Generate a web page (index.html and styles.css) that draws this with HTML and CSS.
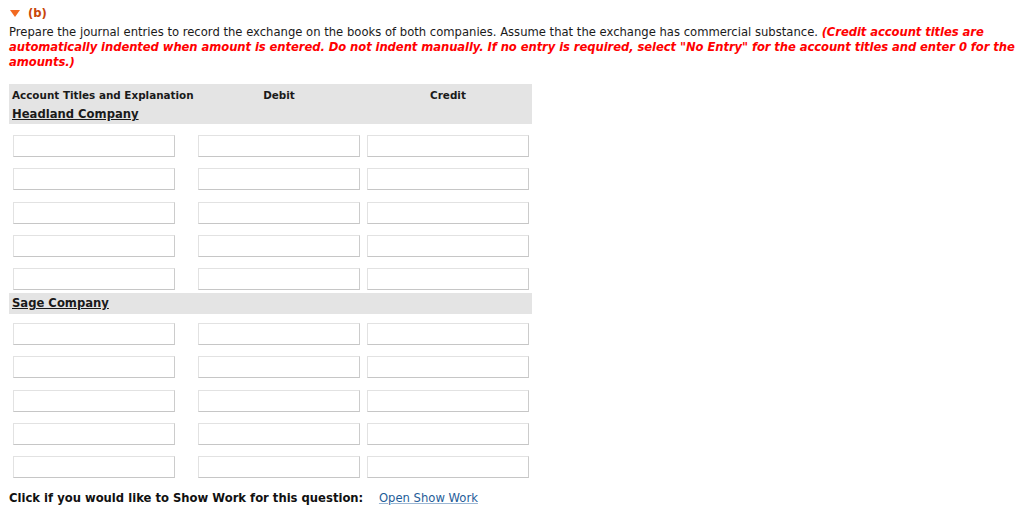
FILE: index.html
```html
<!DOCTYPE html>
<html>
<head>
<meta charset="utf-8">
<link rel="stylesheet" href="styles.css">
</head>
<body>
<div class="page">
  <div class="part-head">
    <span class="tri"></span><span class="part-label">(b)</span>
  </div>
  <p class="prompt">Prepare the journal entries to record the exchange on the books of both companies. Assume that the exchange has commercial substance. <span class="note">(Credit account titles are automatically indented when amount is entered. Do not indent manually. If no entry is required, select "No Entry" for the account titles and enter 0 for the amounts.)</span></p>

  <div class="journal">
    <div class="band band-head">
      <div class="row head-row">
        <div class="h1">Account Titles and Explanation</div>
        <div class="hc hc2">Debit</div>
        <div class="hc hc3">Credit</div>
      </div>
      <div class="company">Headland Company</div>
    </div>
    <div class="entries">
      <div class="row"><input class="c1"><input class="c2"><input class="c3"></div>
      <div class="row"><input class="c1"><input class="c2"><input class="c3"></div>
      <div class="row"><input class="c1"><input class="c2"><input class="c3"></div>
      <div class="row"><input class="c1"><input class="c2"><input class="c3"></div>
      <div class="row"><input class="c1"><input class="c2"><input class="c3"></div>
    </div>
    <div class="band band-sage">
      <div class="company">Sage Company</div>
    </div>
    <div class="entries entries-sage">
      <div class="row"><input class="c1"><input class="c2"><input class="c3"></div>
      <div class="row"><input class="c1"><input class="c2"><input class="c3"></div>
      <div class="row"><input class="c1"><input class="c2"><input class="c3"></div>
      <div class="row"><input class="c1"><input class="c2"><input class="c3"></div>
      <div class="row"><input class="c1"><input class="c2"><input class="c3"></div>
    </div>
  </div>

  <div class="showwork">
    <span class="sw-label">Click if you would like to Show Work for this question:</span>
    <a class="sw-link" href="#">Open Show Work</a>
  </div>
</div>
</body>
</html>
```
FILE: styles.css
```css
html, body {
  margin: 0;
  padding: 0;
  background: #ffffff;
}
.page {
  padding: 6px 0 0 9px;
  font-family: "DejaVu Sans", Verdana, sans-serif;
  font-size: 11.6px;
  color: #1a1a1a;
}
.part-head {
  display: flex;
  align-items: center;
  height: 14px;
}
.tri {
  width: 0;
  height: 0;
  border-left: 5px solid transparent;
  border-right: 5px solid transparent;
  border-top: 7px solid #f26a21;
  margin-right: 8px;
  margin-left: 1px;
}
.part-label {
  color: #c8460a;
  font-weight: bold;
}
.prompt {
  margin: 5px 0 0 0;
  line-height: 15px;
  width: 1015px;
}
.note {
  color: #ff0000;
  font-weight: bold;
  font-style: italic;
  letter-spacing: -0.08px;
}
.journal {
  width: 523px;
  margin-top: 14px;
}
.band {
  background: #e4e4e4;
}
.band-head {
  height: 40px;
  padding-top: 2px;
  box-sizing: border-box;
}
.row {
  display: flex;
}
.row > * {
  flex-shrink: 0;
}
.head-row {
  height: 18px;
  line-height: 18px;
  font-weight: bold;
  font-size: 10.4px;
}
.h1 {
  width: 189px;
  padding-left: 3px;
  box-sizing: border-box;
  white-space: nowrap;
}
.hc {
  text-align: center;
  width: 162px;
}
.hc3 {
  margin-left: 7px;
}
.company {
  font-weight: bold;
  text-decoration: underline;
  padding-left: 3px;
  line-height: 20px;
  height: 20px;
}
.band-sage {
  height: 21px;
  margin-top: 3px;
}
.band-sage .company {
  line-height: 21px;
  height: 21px;
}
.entries {
  padding-top: 11px;
  display: flex;
  flex-direction: column;
  gap: 11.25px;
}
.entries-sage {
  padding-top: 9px;
}
input {
  height: 22px;
  box-sizing: border-box;
  margin: 0;
  padding: 0 3px;
  border: 1px solid;
  border-color: #e2e2e2 #cccccc #c6c6c6 #e2e2e2;
  background: #ffffff;
  font-family: "DejaVu Sans", Verdana, sans-serif;
  font-size: 11px;
}
.c1 {
  width: 162px;
  margin-left: 4px;
}
.c2 {
  width: 162px;
  margin-left: 23px;
}
.c3 {
  width: 162px;
  margin-left: 7px;
}
.showwork {
  margin-top: 13px;
  line-height: 15px;
}
.sw-label {
  font-weight: bold;
  color: #111111;
}
.sw-link {
  color: #1f5d99;
  margin-left: 12px;
  text-decoration: underline;
  text-decoration-color: #9bb6d3;
}
```
